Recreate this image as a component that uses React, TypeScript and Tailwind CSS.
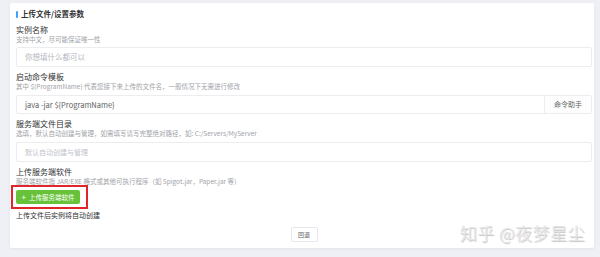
import React from "react";

const Field: React.FC<{ label: string; desc: string; className?: string; children?: React.ReactNode }> = ({
    label,
    desc,
    className,
    children,
}) => (
    <div className={className}>
        <div className="h-[10px] text-[8px] leading-[10px] text-[#303133]">{label}</div>
        <div className="h-[8px] text-[6.5px] leading-[8px] text-[#a0a3a8] whitespace-nowrap">{desc}</div>
        {children}
    </div>
);

const App: React.FC = () => {
    return (
        <div className="w-[600px] h-[257px] bg-[#eef0f5] pt-[3px] pl-[10px] pr-[6px] font-['Noto_Sans_CJK_SC','Liberation_Sans',sans-serif] overflow-hidden">
            <div className="relative h-[245px] bg-white rounded-[2px] shadow-[0_1px_3px_rgba(0,0,0,0.06)] pl-[6px] pr-[2px] pt-[6px]">
                <div className="flex items-center h-[10px] gap-[3px]">
                    <span className="w-[2px] h-[7px] bg-[#409eff] rounded-[1px]" />
                    <span className="text-[7.5px] leading-[10px] font-bold text-[#303133]">上传文件/设置参数</span>
                </div>

                <Field label="实例名称" desc="支持中文，尽可能保证唯一性" className="mt-[6px]">
                    <div className="mt-[4px] h-[20px] border border-[#ebedf0] rounded-[2px] flex items-center pl-[8px] text-[7.5px] text-[#b4b7bd]">
                        你想填什么都可以
                    </div>
                </Field>

                <Field
                    label="启动命令模板"
                    desc="其中 ${ProgramName} 代表您接下来上传的文件名，一般情况下无需进行修改"
                    className="mt-[5px]"
                >
                    <div className="mt-[5px] h-[19px] flex border border-[#ebedf0] rounded-[2px]">
                        <div className="flex-1 flex items-center pl-[8px] text-[7.5px] text-[#606266]">
                            java -jar ${"{ProgramName}"}
                        </div>
                        <div className="w-[47px] border-l border-[#ebedf0] bg-[#fdfdfd] flex items-center justify-center text-[7px] text-[#606266]">
                            命令助手
                        </div>
                    </div>
                </Field>

                <Field
                    label="服务端文件目录"
                    desc="选填，默认自动创建与管理，如需填写请写完整绝对路径，如: C:/Servers/MyServer"
                    className="mt-[5px]"
                >
                    <div className="mt-[5px] h-[20px] border border-[#ebedf0] rounded-[2px] flex items-center pl-[8px] text-[7px] text-[#c0c4cc]">
                        默认自动创建与管理
                    </div>
                </Field>

                <Field
                    label="上传服务端软件"
                    desc="服务端软件指 JAR/EXE 格式或其他可执行程序（如 Spigot.jar，Paper.jar 等）"
                    className="mt-[5px]"
                >
                    <div className="ml-[-5px] w-[77px] h-[24px] border-2 border-[#e0262b] flex items-center pl-[3px]">
                        <button className="w-[64px] h-[14px] bg-[#67c23a] rounded-[2px] text-white text-[6.5px] leading-[14px] flex items-center justify-center gap-[3px]">
                            <span className="text-[8px]">+</span>
                            <span>上传服务端软件</span>
                        </button>
                    </div>
                </Field>

                <div className="mt-[2px] h-[8px] text-[7px] leading-[8px] text-[#303133]">上传文件后实例将自动创建</div>

                <div className="mt-[8px] flex justify-center">
                    <button className="w-[27px] h-[15px] border border-[#e4e7ed] rounded-[2px] bg-white text-[6px] text-[#606266] flex items-center justify-center">
                        回退
                    </button>
                </div>

                <div className="absolute right-[9px] bottom-[4px] text-[17px] leading-[22px] font-light text-[#e2e2e2] tracking-[0.5px] [text-shadow:0_0_1px_#fff,1px_1px_1px_#b0b0b0] whitespace-nowrap">
                    知乎 @夜梦星尘
                </div>
            </div>
        </div>
    );
};

export default App;
